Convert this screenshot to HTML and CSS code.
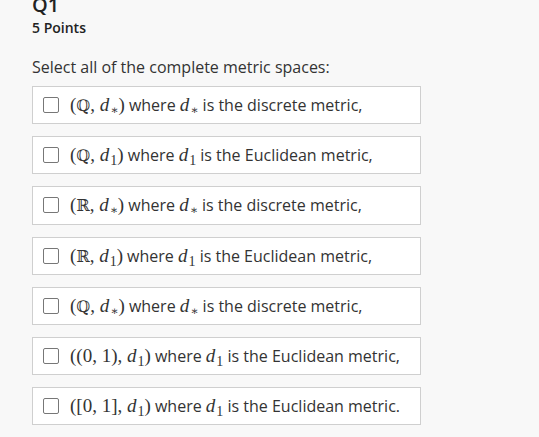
FILE: index.html
```html
<!DOCTYPE html>
<html>
<head>
<meta charset="utf-8">
<link rel="stylesheet" href="styles.css">
</head>
<body>
<div class="question">
  <h2 class="qtitle">Q1</h2>
  <div class="points">5 Points</div>
  <p class="prompt">Select all of the complete metric spaces:</p>
  <ul class="options">
    <li class="option"><span class="box"></span><span class="label"><span class="m">(<span class="bb">ℚ</span>, <i>d</i><sub class="star">∗</sub>)</span> where <span class="m"><i>d</i><sub class="star">∗</sub></span> is the discrete metric,</span></li>
    <li class="option"><span class="box"></span><span class="label"><span class="m">(<span class="bb">ℚ</span>, <i>d</i><sub>1</sub>)</span> where <span class="m"><i>d</i><sub>1</sub></span> is the Euclidean metric,</span></li>
    <li class="option"><span class="box"></span><span class="label"><span class="m">(<span class="bb">ℝ</span>, <i>d</i><sub class="star">∗</sub>)</span> where <span class="m"><i>d</i><sub class="star">∗</sub></span> is the discrete metric,</span></li>
    <li class="option"><span class="box"></span><span class="label"><span class="m">(<span class="bb">ℝ</span>, <i>d</i><sub>1</sub>)</span> where <span class="m"><i>d</i><sub>1</sub></span> is the Euclidean metric,</span></li>
    <li class="option"><span class="box"></span><span class="label"><span class="m">(<span class="bb">ℚ</span>, <i>d</i><sub class="star">∗</sub>)</span> where <span class="m"><i>d</i><sub class="star">∗</sub></span> is the discrete metric,</span></li>
    <li class="option"><span class="box"></span><span class="label"><span class="m">((0, 1), <i>d</i><sub>1</sub>)</span> where <span class="m"><i>d</i><sub>1</sub></span> is the Euclidean metric,</span></li>
    <li class="option"><span class="box"></span><span class="label"><span class="m">([0, 1], <i>d</i><sub>1</sub>)</span> where <span class="m"><i>d</i><sub>1</sub></span> is the Euclidean metric.</span></li>
  </ul>
</div>
</body>
</html>
```
FILE: styles.css
```css
html, body {
  margin: 0;
  padding: 0;
  background: #f8f8f8;
}
body {
  font-family: "Open Sans", "Noto Sans", sans-serif;
  color: #333;
}
.question {
  padding-left: 32px;
  margin-top: -7px;
}
.qtitle {
  margin: 0;
  font-size: 20px;
  font-weight: 600;
  line-height: 24px;
  color: #222;
}
.points {
  font-size: 14px;
  font-weight: 600;
  line-height: 18px;
  margin-top: 2px;
  color: #222;
}
.prompt {
  margin: 19px 0 0 0;
  font-size: 16px;
  line-height: 22px;
}
.options {
  list-style: none;
  margin: 8px 0 0 0;
  padding: 0;
  display: flex;
  flex-direction: column;
  gap: 12px;
}
.option {
  box-sizing: border-box;
  width: 389px;
  height: 38.2px;
  background: #fff;
  border: 1px solid #cfcfcf;
  display: flex;
  align-items: center;
  padding-left: 10px;
  font-size: 16px;
}
.box {
  width: 14px;
  height: 14px;
  border: 1px solid #777;
  border-radius: 2px;
  flex: none;
  margin-right: 11px;
}
.label {
  white-space: nowrap;
}
.m {
  font-family: "Liberation Serif", "DejaVu Serif", serif;
  font-size: 19px;
}
.m i {
  font-style: italic;
  margin-right: 1px;
}
.m sub {
  font-size: 14px;
  vertical-align: -4px;
  line-height: 0;
}
.m sub.star {
  font-size: 12px;
  vertical-align: -3px;
}
.bb {
  font-family: "DejaVu Serif", serif;
  font-size: 16px;
}
```
